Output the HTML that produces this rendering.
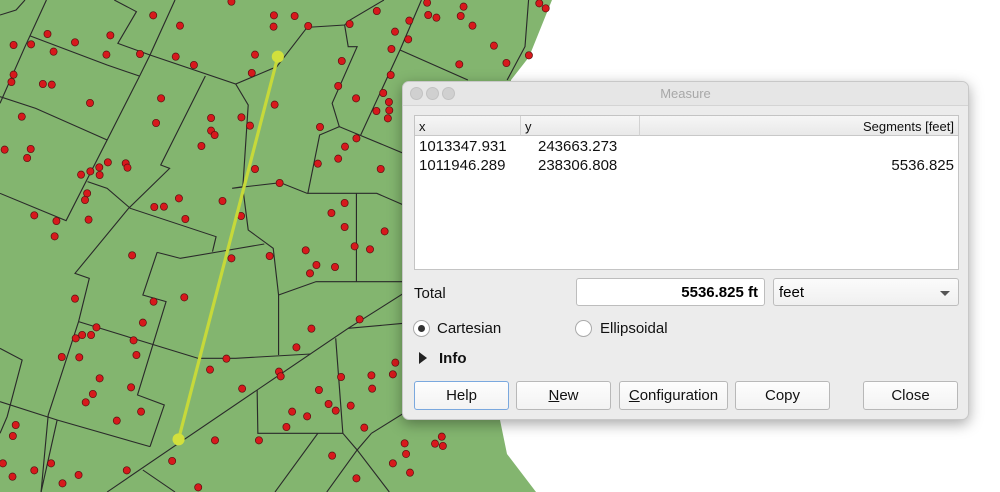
<!DOCTYPE html>
<html><head><meta charset="utf-8"><style>
*{margin:0;padding:0;box-sizing:border-box}
body{width:1000px;height:492px;overflow:hidden;background:#fff;font-family:"Liberation Sans",sans-serif;position:relative}
#map{position:absolute;left:0;top:0}
.dlg{position:absolute;left:402px;top:81px;width:567px;height:339px;background:#ececec;border:1px solid #c8c8c8;border-radius:7px;box-shadow:0 4px 14px rgba(0,0,0,.35);overflow:hidden}
.tb{position:absolute;left:0;top:0;right:0;height:24px;background:#e6e6e6;border-bottom:1px solid #d4d4d4;text-align:center;font-size:13px;color:#a8a8a8;line-height:24px}
.tl{position:absolute;top:5px;width:13px;height:13px;border-radius:50%;background:#d0d0d0;border:1px solid #c2c2c2}
.abs{position:absolute}
.tbl{left:11px;top:33px;width:545px;height:155px;background:#fff;border:1px solid #c4c4c4}
.hd{position:absolute;top:0;height:20px;background:linear-gradient(#f6f6f6,#e9e9e9);border-bottom:1px solid #c8c8c8;border-right:1px solid #d2d2d2;font-size:13px;line-height:21px;padding:0 4px;color:#111}
.cell{position:absolute;font-size:15px;color:#111}
.t{font-size:15px;color:#111;position:absolute}
.btn{position:absolute;top:299px;height:29px;background:linear-gradient(#fdfdfd,#f3f3f3);border:1px solid #b8b8b8;border-radius:3px;font-size:15px;text-align:center;line-height:27px;color:#111}
</style></head><body>
<svg id="map" width="1000" height="492" viewBox="0 0 1000 492">
<polygon points="0,0 552,0 529,57 511,80 505,200 500,420 507,454 536,492 0,492" fill="#83b56f"/>
<g transform="scale(0.35714,0.33333)" fill="none" stroke="#2a2a2a" stroke-width="3.2">
<polyline points="0,45 45,30 70,0"/>
<polyline points="320,0 382,35 330,130 420,165 660,252 775,200 860,82 965,75 980,60 1075,0"/>
<polyline points="85,108 300,195 390,228"/>
<polyline points="130,0 70,140 0,310"/>
<polyline points="490,0 420,165 390,230 300,420 185,662 0,580"/>
<polyline points="0,290 100,325 300,420"/>
<polyline points="575,228 450,495 475,505 360,625 210,820 250,835 220,965 135,1245 115,1476"/>
<polyline points="660,252 695,315 680,560 650,565 785,548 860,580 1055,580 1130,615"/>
<polyline points="965,75 975,140 1000,140 930,310 950,380 895,405 862,580"/>
<polyline points="950,380 1130,460"/>
<polyline points="1010,405 1120,150 1180,0"/>
<polyline points="1120,150 1310,240"/>
<polyline points="680,565 695,690 765,745 780,885 780,1065"/>
<polyline points="245,545 300,565 365,625 605,710 595,755"/>
<polyline points="440,757 505,775 740,732"/>
<polyline points="440,757 400,885 465,905 385,1185 460,1215 420,1340"/>
<polyline points="780,885 885,845 1130,845"/>
<polyline points="998,580 998,845"/>
<polyline points="220,965 555,1075 660,1075 870,1062"/>
<polyline points="0,1045 62,1080 20,1250 0,1300"/>
<polyline points="0,1205 160,1260 420,1340"/>
<polyline points="160,1260 115,1476"/>
<polyline points="300,1476 500,1330 720,1170 975,985 1130,880"/>
<polyline points="975,985 1130,970"/>
<polyline points="720,1170 722,1300 960,1300 940,1015"/>
<polyline points="890,1300 770,1476"/>
<polyline points="960,1300 1000,1350 1090,1476"/>
<polyline points="1040,1300 1130,1240"/>
<polyline points="1040,1300 1000,1350 915,1476"/>
<polyline points="1480,0 1470,140 1420,240"/>
<polyline points="400,1410 490,1476"/>
</g>
<g transform="scale(0.35714,0.33333)" fill="#d7191c" stroke="#5a1010" stroke-width="2">
<ellipse rx="10" ry="11" cx="429" cy="46"/><ellipse rx="10" ry="11" cx="504" cy="77"/><ellipse rx="10" ry="11" cx="767" cy="46"/><ellipse rx="10" ry="11" cx="825" cy="48"/><ellipse rx="10" ry="11" cx="766" cy="80"/><ellipse rx="10" ry="11" cx="863" cy="78"/><ellipse rx="10" ry="11" cx="979" cy="72"/><ellipse rx="10" ry="11" cx="1055" cy="33"/><ellipse rx="10" ry="11" cx="1196" cy="8"/><ellipse rx="10" ry="11" cx="1298" cy="20"/><ellipse rx="10" ry="11" cx="1199" cy="45"/><ellipse rx="10" ry="11" cx="1222" cy="53"/><ellipse rx="10" ry="11" cx="1290" cy="48"/><ellipse rx="10" ry="11" cx="1323" cy="77"/><ellipse rx="10" ry="11" cx="1146" cy="62"/><ellipse rx="10" ry="11" cx="1106" cy="95"/><ellipse rx="10" ry="11" cx="1143" cy="118"/><ellipse rx="10" ry="11" cx="1096" cy="147"/><ellipse rx="10" ry="11" cx="1383" cy="137"/><ellipse rx="10" ry="11" cx="1286" cy="193"/><ellipse rx="10" ry="11" cx="1418" cy="189"/><ellipse rx="10" ry="11" cx="1481" cy="166"/><ellipse rx="10" ry="11" cx="1510" cy="10"/><ellipse rx="10" ry="11" cx="1528" cy="25"/><ellipse rx="10" ry="11" cx="648" cy="5"/><ellipse rx="10" ry="11" cx="133" cy="102"/><ellipse rx="10" ry="11" cx="210" cy="127"/><ellipse rx="10" ry="11" cx="309" cy="106"/><ellipse rx="10" ry="11" cx="38" cy="135"/><ellipse rx="10" ry="11" cx="87" cy="133"/><ellipse rx="10" ry="11" cx="150" cy="155"/><ellipse rx="10" ry="11" cx="298" cy="164"/><ellipse rx="10" ry="11" cx="392" cy="162"/><ellipse rx="10" ry="11" cx="492" cy="170"/><ellipse rx="10" ry="11" cx="543" cy="195"/><ellipse rx="10" ry="11" cx="714" cy="164"/><ellipse rx="10" ry="11" cx="705" cy="219"/><ellipse rx="10" ry="11" cx="957" cy="183"/><ellipse rx="10" ry="11" cx="947" cy="258"/><ellipse rx="10" ry="11" cx="997" cy="295"/><ellipse rx="10" ry="11" cx="1094" cy="225"/><ellipse rx="10" ry="11" cx="1073" cy="279"/><ellipse rx="10" ry="11" cx="1089" cy="306"/><ellipse rx="10" ry="11" cx="1090" cy="331"/><ellipse rx="10" ry="11" cx="1054" cy="333"/><ellipse rx="10" ry="11" cx="1086" cy="355"/><ellipse rx="10" ry="11" cx="38" cy="224"/><ellipse rx="10" ry="11" cx="32" cy="246"/><ellipse rx="10" ry="11" cx="120" cy="252"/><ellipse rx="10" ry="11" cx="145" cy="254"/><ellipse rx="10" ry="11" cx="252" cy="309"/><ellipse rx="10" ry="11" cx="451" cy="295"/><ellipse rx="10" ry="11" cx="61" cy="350"/><ellipse rx="10" ry="11" cx="437" cy="369"/><ellipse rx="10" ry="11" cx="591" cy="354"/><ellipse rx="10" ry="11" cx="676" cy="352"/><ellipse rx="10" ry="11" cx="700" cy="377"/><ellipse rx="10" ry="11" cx="591" cy="392"/><ellipse rx="10" ry="11" cx="601" cy="405"/><ellipse rx="10" ry="11" cx="769" cy="314"/><ellipse rx="10" ry="11" cx="896" cy="381"/><ellipse rx="10" ry="11" cx="998" cy="415"/><ellipse rx="10" ry="11" cx="966" cy="440"/><ellipse rx="10" ry="11" cx="947" cy="476"/><ellipse rx="10" ry="11" cx="890" cy="491"/><ellipse rx="10" ry="11" cx="1066" cy="507"/><ellipse rx="10" ry="11" cx="13" cy="449"/><ellipse rx="10" ry="11" cx="86" cy="447"/><ellipse rx="10" ry="11" cx="76" cy="474"/><ellipse rx="10" ry="11" cx="564" cy="438"/><ellipse rx="10" ry="11" cx="714" cy="507"/><ellipse rx="10" ry="11" cx="302" cy="487"/><ellipse rx="10" ry="11" cx="278" cy="502"/><ellipse rx="10" ry="11" cx="279" cy="525"/><ellipse rx="10" ry="11" cx="253" cy="514"/><ellipse rx="10" ry="11" cx="227" cy="524"/><ellipse rx="10" ry="11" cx="352" cy="490"/><ellipse rx="10" ry="11" cx="357" cy="503"/><ellipse rx="10" ry="11" cx="244" cy="580"/><ellipse rx="10" ry="11" cx="238" cy="600"/><ellipse rx="10" ry="11" cx="501" cy="595"/><ellipse rx="10" ry="11" cx="432" cy="621"/><ellipse rx="10" ry="11" cx="459" cy="620"/><ellipse rx="10" ry="11" cx="519" cy="657"/><ellipse rx="10" ry="11" cx="623" cy="603"/><ellipse rx="10" ry="11" cx="675" cy="648"/><ellipse rx="10" ry="11" cx="783" cy="549"/><ellipse rx="10" ry="11" cx="965" cy="609"/><ellipse rx="10" ry="11" cx="928" cy="639"/><ellipse rx="10" ry="11" cx="965" cy="681"/><ellipse rx="10" ry="11" cx="1077" cy="694"/><ellipse rx="10" ry="11" cx="993" cy="739"/><ellipse rx="10" ry="11" cx="1036" cy="748"/><ellipse rx="10" ry="11" cx="856" cy="751"/><ellipse rx="10" ry="11" cx="886" cy="795"/><ellipse rx="10" ry="11" cx="938" cy="801"/><ellipse rx="10" ry="11" cx="868" cy="820"/><ellipse rx="10" ry="11" cx="755" cy="768"/><ellipse rx="10" ry="11" cx="648" cy="775"/><ellipse rx="10" ry="11" cx="96" cy="646"/><ellipse rx="10" ry="11" cx="158" cy="663"/><ellipse rx="10" ry="11" cx="248" cy="659"/><ellipse rx="10" ry="11" cx="153" cy="709"/><ellipse rx="10" ry="11" cx="370" cy="766"/><ellipse rx="10" ry="11" cx="210" cy="896"/><ellipse rx="10" ry="11" cx="516" cy="892"/><ellipse rx="10" ry="11" cx="430" cy="905"/><ellipse rx="10" ry="11" cx="400" cy="968"/><ellipse rx="10" ry="11" cx="270" cy="982"/><ellipse rx="10" ry="11" cx="255" cy="1005"/><ellipse rx="10" ry="11" cx="230" cy="1005"/><ellipse rx="10" ry="11" cx="212" cy="1015"/><ellipse rx="10" ry="11" cx="374" cy="1021"/><ellipse rx="10" ry="11" cx="173" cy="1071"/><ellipse rx="10" ry="11" cx="222" cy="1072"/><ellipse rx="10" ry="11" cx="382" cy="1065"/><ellipse rx="10" ry="11" cx="872" cy="986"/><ellipse rx="10" ry="11" cx="1007" cy="958"/><ellipse rx="10" ry="11" cx="830" cy="1042"/><ellipse rx="10" ry="11" cx="634" cy="1076"/><ellipse rx="10" ry="11" cx="588" cy="1109"/><ellipse rx="10" ry="11" cx="781" cy="1115"/><ellipse rx="10" ry="11" cx="786" cy="1129"/><ellipse rx="10" ry="11" cx="678" cy="1166"/><ellipse rx="10" ry="11" cx="279" cy="1135"/><ellipse rx="10" ry="11" cx="367" cy="1162"/><ellipse rx="10" ry="11" cx="260" cy="1182"/><ellipse rx="10" ry="11" cx="240" cy="1207"/><ellipse rx="10" ry="11" cx="395" cy="1235"/><ellipse rx="10" ry="11" cx="327" cy="1262"/><ellipse rx="10" ry="11" cx="44" cy="1275"/><ellipse rx="10" ry="11" cx="36" cy="1308"/><ellipse rx="10" ry="11" cx="893" cy="1170"/><ellipse rx="10" ry="11" cx="955" cy="1131"/><ellipse rx="10" ry="11" cx="1040" cy="1126"/><ellipse rx="10" ry="11" cx="1042" cy="1166"/><ellipse rx="10" ry="11" cx="1100" cy="1123"/><ellipse rx="10" ry="11" cx="1107" cy="1088"/><ellipse rx="10" ry="11" cx="982" cy="1217"/><ellipse rx="10" ry="11" cx="920" cy="1212"/><ellipse rx="10" ry="11" cx="940" cy="1232"/><ellipse rx="10" ry="11" cx="818" cy="1235"/><ellipse rx="10" ry="11" cx="860" cy="1249"/><ellipse rx="10" ry="11" cx="802" cy="1281"/><ellipse rx="10" ry="11" cx="602" cy="1321"/><ellipse rx="10" ry="11" cx="725" cy="1321"/><ellipse rx="10" ry="11" cx="1020" cy="1283"/><ellipse rx="10" ry="11" cx="1133" cy="1330"/><ellipse rx="10" ry="11" cx="1137" cy="1362"/><ellipse rx="10" ry="11" cx="1218" cy="1331"/><ellipse rx="10" ry="11" cx="1240" cy="1338"/><ellipse rx="10" ry="11" cx="1237" cy="1310"/><ellipse rx="10" ry="11" cx="930" cy="1367"/><ellipse rx="10" ry="11" cx="482" cy="1383"/><ellipse rx="10" ry="11" cx="143" cy="1390"/><ellipse rx="10" ry="11" cx="96" cy="1411"/><ellipse rx="10" ry="11" cx="35" cy="1430"/><ellipse rx="10" ry="11" cx="355" cy="1411"/><ellipse rx="10" ry="11" cx="220" cy="1425"/><ellipse rx="10" ry="11" cx="175" cy="1450"/><ellipse rx="10" ry="11" cx="555" cy="1462"/><ellipse rx="10" ry="11" cx="998" cy="1435"/><ellipse rx="10" ry="11" cx="1100" cy="1390"/><ellipse rx="10" ry="11" cx="1148" cy="1418"/><ellipse rx="10" ry="11" cx="8" cy="1390"/>
</g>
<g transform="scale(0.35714,0.33333)">
<line x1="778" y1="170" x2="500" y2="1318" stroke="#c6d93a" stroke-width="9"/>
<ellipse cx="778" cy="170" rx="17" ry="18" fill="#d2e03c"/>
<ellipse cx="500" cy="1318" rx="17" ry="18" fill="#d2e03c"/>
</g>
</svg>
<div class="dlg">
<div class="tb">Measure</div>
<div class="tl" style="left:7px"></div><div class="tl" style="left:23px"></div><div class="tl" style="left:39px"></div>
<div class="abs tbl">
<div class="hd" style="left:0;width:106px">x</div>
<div class="hd" style="left:106px;width:119px">y</div>
<div class="hd" style="left:225px;width:318px;text-align:right;border-right:none">Segments [feet]</div>
<div class="cell" style="left:4px;top:22px">1013347.931</div>
<div class="cell" style="left:123px;top:22px">243663.273</div>
<div class="cell" style="left:4px;top:41px">1011946.289</div>
<div class="cell" style="left:123px;top:41px">238306.808</div>
<div class="cell" style="right:4px;top:41px">5536.825</div>
</div>
<div class="t" style="left:11px;top:203px">Total</div>
<div class="abs" style="left:173px;top:196px;width:189px;height:28px;background:#fff;border:1px solid #bdbdbd;border-radius:3px;font-size:15px;font-weight:bold;text-align:right;padding-right:6px;line-height:27px">5536.825 ft</div>
<div class="abs" style="left:370px;top:196px;width:186px;height:28px;background:linear-gradient(#fbfbfb,#f0f0f0);border:1px solid #bdbdbd;border-radius:3px;font-size:15px;padding-left:5px;line-height:27px">feet<span style="position:absolute;right:8px;top:12px;width:0;height:0;border-left:5px solid transparent;border-right:5px solid transparent;border-top:5px solid #555"></span></div>
<div class="abs" style="left:10px;top:238px;width:17px;height:17px;border-radius:50%;background:#fff;border:1px solid #aaa"><div style="position:absolute;left:4px;top:4px;width:7px;height:7px;border-radius:50%;background:#333"></div></div>
<div class="t" style="left:34px;top:238px">Cartesian</div>
<div class="abs" style="left:172px;top:238px;width:17px;height:17px;border-radius:50%;background:#fff;border:1px solid #aaa"></div>
<div class="t" style="left:197px;top:238px">Ellipsoidal</div>
<div class="abs" style="left:16px;top:270px;width:0;height:0;border-top:6px solid transparent;border-bottom:6px solid transparent;border-left:8px solid #222"></div>
<div class="t" style="left:36px;top:268px;font-weight:bold">Info</div>
<div class="btn" style="left:11px;width:95px;border-color:#7aa8de">Help</div>
<div class="btn" style="left:113px;width:95px"><u>N</u>ew</div>
<div class="btn" style="left:216px;width:109px"><u>C</u>onfiguration</div>
<div class="btn" style="left:332px;width:95px">Copy</div>
<div class="btn" style="left:460px;width:95px">Close</div>
</div>
</body></html>
